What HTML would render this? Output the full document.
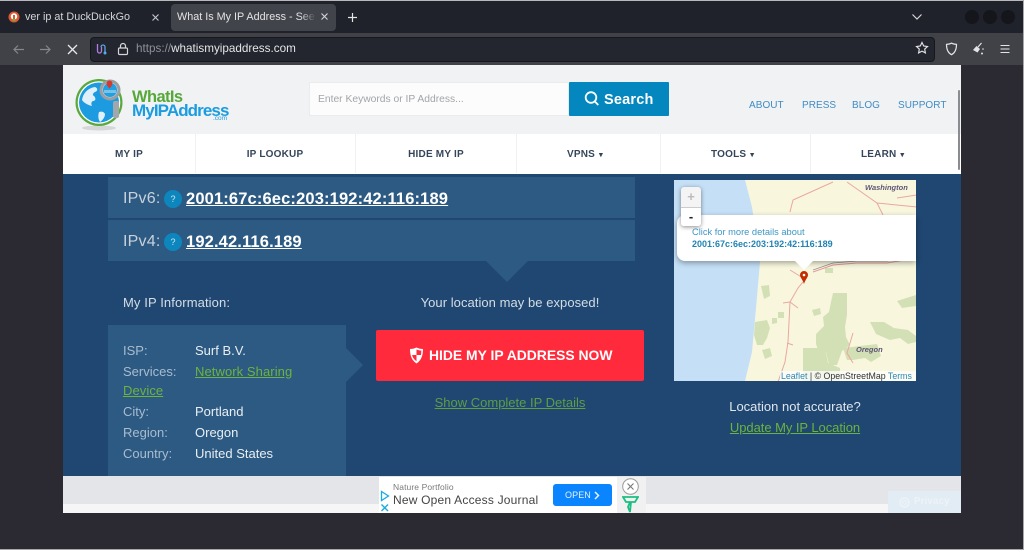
<!DOCTYPE html>
<html><head><meta charset="utf-8"><title>What Is My IP Address</title>
<style>
html,body{margin:0;padding:0;width:1024px;height:550px;overflow:hidden;background:#2b2a33;font-family:"Liberation Sans",sans-serif}
.a{position:absolute}
.t{position:absolute;white-space:nowrap;line-height:1}
.c{transform:translateX(-50%)}
.nav{font-weight:bold;font-size:10px;letter-spacing:.2px;color:#36465a;top:149.5px}
.nav span{font-size:7.5px;margin-left:1px;vertical-align:0}
.top{font-size:10px;letter-spacing:.05px;color:#3f8cc4;top:100.5px}
.sep{position:absolute;top:134px;width:1px;height:39px;background:#f0f1f3}
.lab{color:#a9bccf;font-size:13px}
.val{color:#e9eef3;font-size:13px}
.g{color:#6cb33f;text-decoration:underline;font-size:13px;letter-spacing:.08px}
.q{position:absolute;left:164px;width:18px;height:18px;border-radius:50%;background:#0d86bd;color:#cfe6f2;font-size:9px;line-height:18px;text-align:center}
</style></head><body>
<!-- window chrome -->
<div class="a" style="left:0;top:0;width:1024px;height:1px;background:#b9b9bb"></div>
<div class="a" style="left:0;top:1px;width:1024px;height:32px;background:#1f222a"></div>
<div class="a" style="left:0;top:33px;width:1024px;height:32px;background:#404247"></div>
<div class="a" style="left:1023px;top:0;width:1px;height:550px;background:#a8a8aa"></div>
<div class="a" style="left:0;top:549px;width:1024px;height:1px;background:#a8a8aa"></div>
<div class="a" style="left:171px;top:4px;width:165px;height:27px;border-radius:4px;background:#42444b"></div>
<svg class="a" style="left:8px;top:11px" width="12" height="12" viewBox="0 0 12 12"><circle cx="6" cy="6" r="5.5" fill="#de5833"/><circle cx="6" cy="5.500" r="3.200" fill="#fff"/><path d="M5 4h2v5H5z" fill="#de5833"/><path d="M4 8l4 0-1 2H5z" fill="#6cb33f"/></svg>
<div class="t" style="left:25px;top:12px;font-size:10.800px;color:#d4d5d8">ver ip at DuckDuckGo</div>
<svg class="a" style="left:151px;top:13px" width="9" height="9" viewBox="0 0 9 9"><path d="M1.500 1.500l6 6M7.500 1.500l-6 6" stroke="#c8c9cc" stroke-width="1.100"/></svg>
<div class="t" style="left:177px;top:12px;font-size:10.800px;color:#e2e3e5;width:139px;overflow:hidden">What Is My IP Address - See</div>
<div class="a" style="left:300px;top:8px;width:16px;height:20px;background:linear-gradient(90deg,rgba(66,68,75,0),#42444b)"></div>
<svg class="a" style="left:320px;top:12px" width="9" height="9" viewBox="0 0 9 9"><path d="M1.500 1.500l6 6M7.500 1.500l-6 6" stroke="#d5d6d8" stroke-width="1.100"/></svg>
<svg class="a" style="left:347px;top:12px" width="11" height="11" viewBox="0 0 11 11"><path d="M5.500 1v9M1 5.500h9" stroke="#e3e4e6" stroke-width="1.200"/></svg>
<svg class="a" style="left:911px;top:13px" width="12" height="8" viewBox="0 0 12 8"><path d="M1.500 1.500L6 6l4.500-4.500" fill="none" stroke="#d5d6d8" stroke-width="1.200"/></svg>
<div class="a" style="left:965px;top:10px;width:14px;height:14px;border-radius:50%;background:#14161b"></div>
<div class="a" style="left:983px;top:10px;width:14px;height:14px;border-radius:50%;background:#14161b"></div>
<div class="a" style="left:1001px;top:10px;width:14px;height:14px;border-radius:50%;background:#14161b"></div>
<!-- toolbar -->
<svg class="a" style="left:12px;top:43px" width="13" height="13" viewBox="0 0 13 13"><path d="M12 6.500H2M6 2.500l-4 4 4 4" fill="none" stroke="#85878b" stroke-width="1.200"/></svg>
<svg class="a" style="left:39px;top:43px" width="13" height="13" viewBox="0 0 13 13"><path d="M1 6.500H11M7 2.500l4 4-4 4" fill="none" stroke="#85878b" stroke-width="1.200"/></svg>
<svg class="a" style="left:67px;top:44px" width="11" height="11" viewBox="0 0 11 11"><path d="M1 1l9 9M10 1l-9 9" stroke="#e8e8ea" stroke-width="1.300"/></svg>
<div class="a" style="left:90px;top:37px;width:843px;height:23px;border-radius:4px;background:#23252f;border:1px solid #17181d;margin:-.5px 0 0"></div>
<svg class="a" style="left:95px;top:42px" width="13" height="14" viewBox="0 0 13 14"><path d="M2.500 2v7a2 2 0 0 0 4 0V5" fill="none" stroke="#b07fe0" stroke-width="1.300"/><path d="M10 12V5a2 2 0 0 0-4 0" fill="none" stroke="#5aa6e6" stroke-width="1.300"/><circle cx="10" cy="11" r="1.500" fill="#4fb0e8"/></svg>
<svg class="a" style="left:117px;top:42px" width="12" height="14" viewBox="0 0 12 14"><rect x="1.500" y="6" width="9" height="6.500" rx="1" fill="none" stroke="#d5d6d8" stroke-width="1.200"/><path d="M3.500 6V4a2.500 2.500 0 0 1 5 0v2" fill="none" stroke="#d5d6d8" stroke-width="1.200"/></svg>
<div class="t" style="left:136px;top:43px;font-size:11.700px;color:#8f9196">https://<span style="color:#e4e5e7">whatismyipaddress.com</span></div>
<svg class="a" style="left:915px;top:41px" width="14" height="14" viewBox="0 0 14 14"><path d="M7 1.500l1.700 3.500 3.800.5-2.800 2.600.7 3.800L7 10.100l-3.400 1.800.7-3.800L1.500 5.500l3.800-.5z" fill="none" stroke="#e3e4e6" stroke-width="1.150"/></svg>
<svg class="a" style="left:945px;top:42px" width="13" height="14" viewBox="0 0 13 14"><path d="M6.500 1.200c1.500.8 3.200 1.100 5 1.200 0 4-.8 8.200-5 10.300C2.300 10.600 1.500 6.400 1.500 2.400c1.800-.1 3.500-.4 5-1.200z" fill="none" stroke="#e3e4e6" stroke-width="1.200"/></svg>
<svg class="a" style="left:971px;top:42px" width="14" height="14" viewBox="0 0 14 14"><path d="M10.500 1L7 5" stroke="#e3e4e6" stroke-width="1.200"/><path d="M5.500 4l3.500 3-2.500 3.500L2 8z" fill="#e3e4e6"/><circle cx="12" cy="7" r=".8" fill="#e3e4e6"/><circle cx="11" cy="11.500" r="1" fill="#e3e4e6"/></svg>
<svg class="a" style="left:1000px;top:44px" width="10" height="10" viewBox="0 0 10 10"><path d="M.500 1.500h9M.500 5h9M.500 8.500h9" stroke="#e3e4e6" stroke-width="1.100"/></svg>

<!-- page -->
<div class="a" style="left:63px;top:65px;width:898px;height:69px;background:#f0f2f4"></div>
<div class="a" style="left:63px;top:134px;width:898px;height:40px;background:#fff"></div>
<div class="a" style="left:63px;top:174px;width:898px;height:302px;background:#1f4771"></div>
<div class="a" style="left:63px;top:476px;width:898px;height:28px;background:#e3e5e8"></div>
<div class="a" style="left:63px;top:504px;width:898px;height:9px;background:#f6f6f6"></div>
<div class="a" style="left:958px;top:90px;width:2px;height:80px;background:#8a8c90;border-radius:1px"></div>

<!-- logo -->
<svg class="a" style="left:75px;top:76px" width="60" height="58" viewBox="0 0 60 58">
<ellipse cx="24" cy="52" rx="17" ry="2.500" fill="#d5d7d9"/>
<circle cx="24" cy="26.500" r="23.500" fill="#5ba93c"/>
<circle cx="24" cy="26.500" r="21.300" fill="#fff"/>
<circle cx="24" cy="26.500" r="20" fill="#1c9be0"/>
<path d="M7 24c1-7 6-12 13-13 3 1 3 4 0 5-2 1-3 3-1 4 2 2 2 5-1 5-2 1-2 3-1 5-4-1-8-3-10-6zM24 36c3-1 5 0 6 2 0 3-2 6-5 8-2-3-2-7-1-10z" fill="#dff0f9"/>
<circle cx="35" cy="14" r="9" fill="#d4dadd" stroke="#9a9fa3" stroke-width="3"/>
<circle cx="35" cy="14" r="7" fill="#1ea0e2"/>
<path d="M29 14h12v3H29z" fill="#7ac1e8"/>
<path d="M34.500 4.500a3 3 0 0 1 3 3c0 2-3 5-3 5s-3-3-3-5a3 3 0 0 1 3-3z" fill="#d33a2c"/>
<rect x="38" y="25" width="6" height="17" rx="2" fill="#a2a7ab"/>
</svg>
<div class="t" style="left:132px;top:89px;font-size:16.500px;font-weight:bold;letter-spacing:-.6px;color:#57a83a">WhatIs</div>
<div class="t" style="left:132px;top:102px;font-size:17px;font-weight:bold;letter-spacing:-.9px;color:#1c9ce0">MyIPAddress</div>
<div class="t" style="left:213px;top:116px;font-size:6.500px;color:#1c9ce0">.com</div>

<!-- search -->
<div class="a" style="left:309px;top:82px;width:260px;height:34px;background:#fcfcfc;border:1px solid #e9ebed;box-sizing:border-box"></div>
<div class="t" style="left:318px;top:95px;font-size:10.300px;color:#a3a5a8">Enter Keywords or IP Address...</div>
<div class="a" style="left:569px;top:82px;width:100px;height:34px;background:#0486be;border-radius:1px"></div>
<svg class="a" style="left:584px;top:90px" width="16" height="17" viewBox="0 0 16 17"><circle cx="7" cy="7.500" r="5.300" fill="none" stroke="#fff" stroke-width="1.800"/><path d="M10.800 11.500l3.500 3.500" stroke="#fff" stroke-width="1.800"/></svg>
<div class="t" style="left:604px;top:92.500px;font-size:14.500px;font-weight:bold;letter-spacing:.2px;color:#fff">Search</div>

<div class="t top" style="left:749px">ABOUT</div>
<div class="t top" style="left:802px">PRESS</div>
<div class="t top" style="left:852px">BLOG</div>
<div class="t top" style="left:898px">SUPPORT</div>

<!-- nav -->
<div class="sep" style="left:195px"></div><div class="sep" style="left:355px"></div><div class="sep" style="left:516px"></div><div class="sep" style="left:660px"></div><div class="sep" style="left:810px"></div>
<div class="t nav c" style="left:129px">MY IP</div>
<div class="t nav c" style="left:275px">IP LOOKUP</div>
<div class="t nav c" style="left:436px">HIDE MY IP</div>
<div class="t nav" style="left:567px">VPNS <span>▾</span></div>
<div class="t nav" style="left:711px">TOOLS <span>▾</span></div>
<div class="t nav" style="left:861px">LEARN <span>▾</span></div>

<!-- ip panels -->
<div class="a" style="left:108px;top:177px;width:527px;height:41px;background:#2d5a82"></div>
<div class="a" style="left:108px;top:220px;width:527px;height:41px;background:#2d5a82"></div>
<div class="a" style="left:486px;top:261px;width:0;height:0;border-left:21px solid transparent;border-right:21px solid transparent;border-top:21px solid #2d5a82"></div>
<div class="t" style="left:123px;top:191px;font-size:16px;letter-spacing:.2px;color:#c7d2dc">IPv6:</div>
<div class="q" style="top:190px">?</div>
<div class="t" style="left:186px;top:190.500px;font-size:16.500px;font-weight:bold;letter-spacing:.14px;color:#fff;text-decoration:underline">2001:67c:6ec:203:192:42:116:189</div>
<div class="t" style="left:123px;top:234px;font-size:16px;letter-spacing:.2px;color:#c7d2dc">IPv4:</div>
<div class="q" style="top:233px">?</div>
<div class="t" style="left:186px;top:233.500px;font-size:16.500px;font-weight:bold;letter-spacing:.14px;color:#fff;text-decoration:underline">192.42.116.189</div>

<div class="t" style="left:123px;top:296px;font-size:13px;letter-spacing:.1px;color:#d4dde6">My IP Information:</div>
<div class="t c" style="left:510px;top:296px;font-size:13px;letter-spacing:.05px;color:#d4dde6">Your location may be exposed!</div>

<!-- info -->
<div class="a" style="left:108px;top:325px;width:238px;height:151px;background:#2d5a82"></div>
<div class="a" style="left:346px;top:348px;width:0;height:0;border-top:17px solid transparent;border-bottom:17px solid transparent;border-left:17px solid #2d5a82"></div>
<div class="t lab" style="left:123px;top:344px">ISP:</div><div class="t val" style="left:195px;top:344px">Surf B.V.</div>
<div class="t lab" style="left:123px;top:365px">Services:</div><div class="t g" style="left:195px;top:365px">Network Sharing</div>
<div class="t g" style="left:123px;top:384px">Device</div>
<div class="t lab" style="left:123px;top:405px">City:</div><div class="t val" style="left:195px;top:405px">Portland</div>
<div class="t lab" style="left:123px;top:426px">Region:</div><div class="t val" style="left:195px;top:426px">Oregon</div>
<div class="t lab" style="left:123px;top:447px">Country:</div><div class="t val" style="left:195px;top:447px">United States</div>

<!-- cta -->
<div class="a" style="left:376px;top:330px;width:268px;height:51px;background:#ff2a3b;border-radius:2px"></div>
<svg class="a" style="left:409px;top:347px" width="15" height="17" viewBox="0 0 15 17"><path d="M7.500.500c2 1 4 1.500 6.500 1.500 0 5.500-1.200 11-6.500 14.500C2.200 13 1 7.500 1 2c2.500 0 4.500-.5 6.500-1.500z" fill="#fff"/><path d="M7.500 2.500c1.500.6 3 1 4.800 1.100 0 1.600-.1 3-.4 4.400H7.500zM7.500 8v6.300C5 12.500 3.600 10.300 3.100 8z" fill="#ff2a3b"/></svg>
<div class="t" style="left:429px;top:349px;font-size:13.900px;font-weight:bold;color:#fff">HIDE MY IP ADDRESS NOW</div>
<div class="t c g" style="left:510px;top:396px;color:#5f9d47;letter-spacing:0">Show Complete IP Details</div>

<!-- map -->
<svg class="a" style="left:674px;top:180px" width="242" height="201" viewBox="674 180 242 201">
<rect x="674" y="180" width="242" height="201" fill="#f8f7de"/>
<path d="M674 180H745L752 207L760 262L756 308L752 352L745 381H674Z" fill="#c4dff6"/>
<g fill="#d3e0b6">
<path d="M833 293l14 0 0 22-2 12 1 10 4 8-8 6-5 14-8 0-3-13-8-2-2-6 0-10 8-8-1-9 6-5 2-10z"/>
<path d="M803 348l22 0 3 15 12 5 0 13-37 0z"/>
<path d="M843 348l34-4 4 12-10 6-6-4-12 2-6 0z"/>
<path d="M870 322l14 0 10 6 14 2 8 6 0 6-8 2-8-6-10 2-14-6z"/>
<path d="M897 301l19-6 0 11-14 2z"/>
<path d="M755 322l12-2 3 8-3 10-4 7-6 0-3-10z"/>
<path d="M761 286l8-1 1 11-6 3z"/>
<path d="M778 312l6 0 0 6-6 0zM825 268l8 0 0 5-8 0zM772 318l5 0 0 5-5 1zM762 350l8-2 2 8-7 3zM812 310l8-2 1 6-7 2z"/>
</g>
<g fill="none" stroke="#eaa7a0" stroke-width="1">
<path d="M847 182l30 21 40 4"/><path d="M833 182l-40 18-3 12"/><path d="M877 203l6 12"/><path d="M897 198l20-3"/>
<path d="M803 282l-5 6-8 14-2 40-3 20-7 20"/>
<path d="M790 302l8 6M787 343l6 2M790 270l13 8M783 303l7-1"/>
<path d="M853 333l-6 20 6 10"/>
</g>
<path d="M813 272l20-7 24-2 30 0 30-5" fill="none" stroke="#e59a96" stroke-width="1"/>
<path d="M813 270l20-7 24-2 30 0 30-5" fill="none" stroke="#9a8f9c" stroke-width=".8"/>
<text x="865" y="190" font-family="Liberation Sans" font-size="7.500" font-weight="bold" font-style="italic" fill="#5d5574">Washington</text>
<text x="856" y="352" font-family="Liberation Sans" font-size="7.500" font-weight="bold" font-style="italic" fill="#5d5574">Oregon</text>
<path d="M804 271a4 4 0 0 1 4 4c0 2.500-2.500 4-4 9-1.500-5-4-6.500-4-9a4 4 0 0 1 4-4z" fill="#c22d00"/><circle cx="804" cy="275" r="1.300" fill="#fff"/>
</svg>
<div class="a" style="left:677px;top:215px;width:239px;height:46px;background:#fff;border-radius:8px 0 0 8px;box-shadow:0 2px 6px rgba(0,0,0,.35)"></div>
<div class="a" style="left:795px;top:261px;width:0;height:0;border-left:9px solid transparent;border-right:9px solid transparent;border-top:9px solid #fff"></div>
<div class="t" style="left:692px;top:227.500px;font-size:9.300px;color:#3f97c4">Click for more details about</div>
<div class="t" style="left:692px;top:240px;font-size:9px;font-weight:bold;color:#1f82b3">2001:67c:6ec:203:192:42:116:189</div>
<div class="a" style="left:681px;top:187px;width:20px;height:39px;background:#f4f4f4;border-radius:3px;box-shadow:0 1px 4px rgba(0,0,0,.45)"></div>
<div class="a" style="left:681px;top:207px;width:20px;height:19px;background:#fff;border-radius:0 0 3px 3px"></div>
<div class="a" style="left:681px;top:206.500px;width:20px;height:1px;background:#ccc"></div>
<div class="t c" style="left:691px;top:190px;font-size:13px;font-weight:bold;color:#bbb">+</div>
<div class="t c" style="left:691px;top:210px;font-size:13px;font-weight:bold;color:#222">-</div>
<div class="a" style="left:780px;top:371px;width:136px;height:10px;background:rgba(255,255,255,.75)"></div>
<div class="t" style="left:781px;top:372px;font-size:8.800px;color:#333"><span style="color:#2f86b5">Leaflet</span> | © OpenStreetMap <span style="color:#2f86b5">Terms</span></div>

<div class="t c" style="left:795px;top:400px;font-size:13px;color:#dfe5ec">Location not accurate?</div>
<div class="t c g" style="left:795px;top:421px;letter-spacing:-.05px">Update My IP Location</div>

<!-- ad -->
<div class="a" style="left:379px;top:477px;width:238px;height:36px;background:#fff"></div>
<div class="a" style="left:617px;top:477px;width:29px;height:36px;background:#f1f1f1"></div>
<svg class="a" style="left:380px;top:490px" width="10" height="22" viewBox="0 0 10 22"><path d="M1.500 1.500l7 4.500-7 4.500z" fill="none" stroke="#19a9e5" stroke-width="1.300"/><path d="M1.500 14.500l6.500 6.500M8 14.500L1.500 21" stroke="#19a9e5" stroke-width="1.400"/></svg>
<div class="t" style="left:393px;top:483px;font-size:8.500px;letter-spacing:.1px;color:#7a7a7a">Nature Portfolio</div>
<div class="t" style="left:393px;top:493.500px;font-size:12px;letter-spacing:.2px;color:#444">New Open Access Journal</div>
<div class="a" style="left:553px;top:484px;width:59px;height:22px;background:#0a84ff;border-radius:3px"></div>
<div class="t" style="left:565px;top:490.500px;font-size:9px;letter-spacing:.1px;color:#e6f2ff">OPEN</div>
<svg class="a" style="left:594px;top:491px" width="6" height="9" viewBox="0 0 6 9"><path d="M1 1l3.500 3.500L1 8" fill="none" stroke="#e6f2ff" stroke-width="1.500"/></svg>
<svg class="a" style="left:622px;top:478px" width="17" height="35" viewBox="0 0 17 35"><circle cx="8.500" cy="8.500" r="7.800" fill="#fff" stroke="#9b9b9b" stroke-width="1"/><path d="M5.500 5.500l6 6M11.500 5.500l-6 6" stroke="#777" stroke-width="1.100"/><path d="M1 19h15l-3 5H9l-1 10-2-5 2-5H4z" fill="none" stroke="#1bbf83" stroke-width="1.800"/></svg>
<div class="a" style="left:888px;top:491px;width:73px;height:22px;background:#e2ecf4"></div>
<svg class="a" style="left:898px;top:496px" width="13" height="13" viewBox="0 0 13 13"><circle cx="6.500" cy="6.500" r="4.500" fill="none" stroke="#edf3f8" stroke-width="1.500"/><circle cx="6.500" cy="6.500" r="1.800" fill="none" stroke="#edf3f8"/></svg>
<div class="t" style="left:914px;top:497px;font-size:10px;font-weight:bold;color:#edf3f8">Privacy</div>
</body></html>
